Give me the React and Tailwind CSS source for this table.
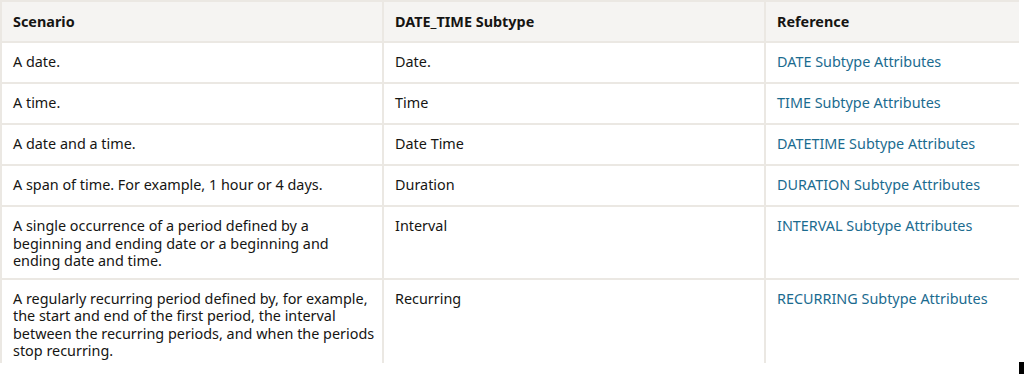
const ROWS = [
  { scenario: "A date.", subtype: "Date.", ref: "DATE Subtype Attributes" },
  { scenario: "A time.", subtype: "Time", ref: "TIME Subtype Attributes" },
  { scenario: "A date and a time.", subtype: "Date Time", ref: "DATETIME Subtype Attributes" },
  { scenario: "A span of time. For example, 1 hour or 4 days.", subtype: "Duration", ref: "DURATION Subtype Attributes" },
  {
    scenario: "A single occurrence of a period defined by a beginning and ending date or a beginning and ending date and time.",
    subtype: "Interval",
    ref: "INTERVAL Subtype Attributes",
  },
  {
    scenario:
      "A regularly recurring period defined by, for example, the start and end of the first period, the interval between the recurring periods, and when the periods stop recurring.",
    subtype: "Recurring",
    ref: "RECURRING Subtype Attributes",
  },
];

const cell = "border-2 border-[#ebe8e3] align-top pl-[11px] pr-[3px] pt-[10px] pb-[8px] h-[41px]";

export default function App() {
  return (
    <div className="flex h-[374px] w-[1024px] bg-white font-['Noto_Sans',sans-serif] text-[14.4px] leading-[17.5px] text-[#161513]">
      <div className="w-[1019px] h-[363px] overflow-hidden self-start">
        <table className="w-[1019px] table-fixed border-collapse">
          <colgroup>
            <col className="w-[382px]" />
            <col className="w-[382px]" />
            <col className="w-[255px]" />
          </colgroup>
          <thead>
            <tr className="bg-[#f5f4f2]">
              <th className={`${cell} text-left font-bold pt-[11px]`}>Scenario</th>
              <th className={`${cell} text-left font-bold pt-[11px]`}>DATE_TIME Subtype</th>
              <th className={`${cell} text-left font-bold pt-[11px]`}>Reference</th>
            </tr>
          </thead>
          <tbody>
            {ROWS.map((r) => (
              <tr key={r.subtype}>
                <td className={cell}>{r.scenario}</td>
                <td className={cell}>{r.subtype}</td>
                <td className={cell}>
                  <a className="text-[#1b6b8f]">{r.ref}</a>
                </td>
              </tr>
            ))}
          </tbody>
        </table>
      </div>
      <div className="w-[5px] h-[12px] bg-black self-end" />
    </div>
  );
}
